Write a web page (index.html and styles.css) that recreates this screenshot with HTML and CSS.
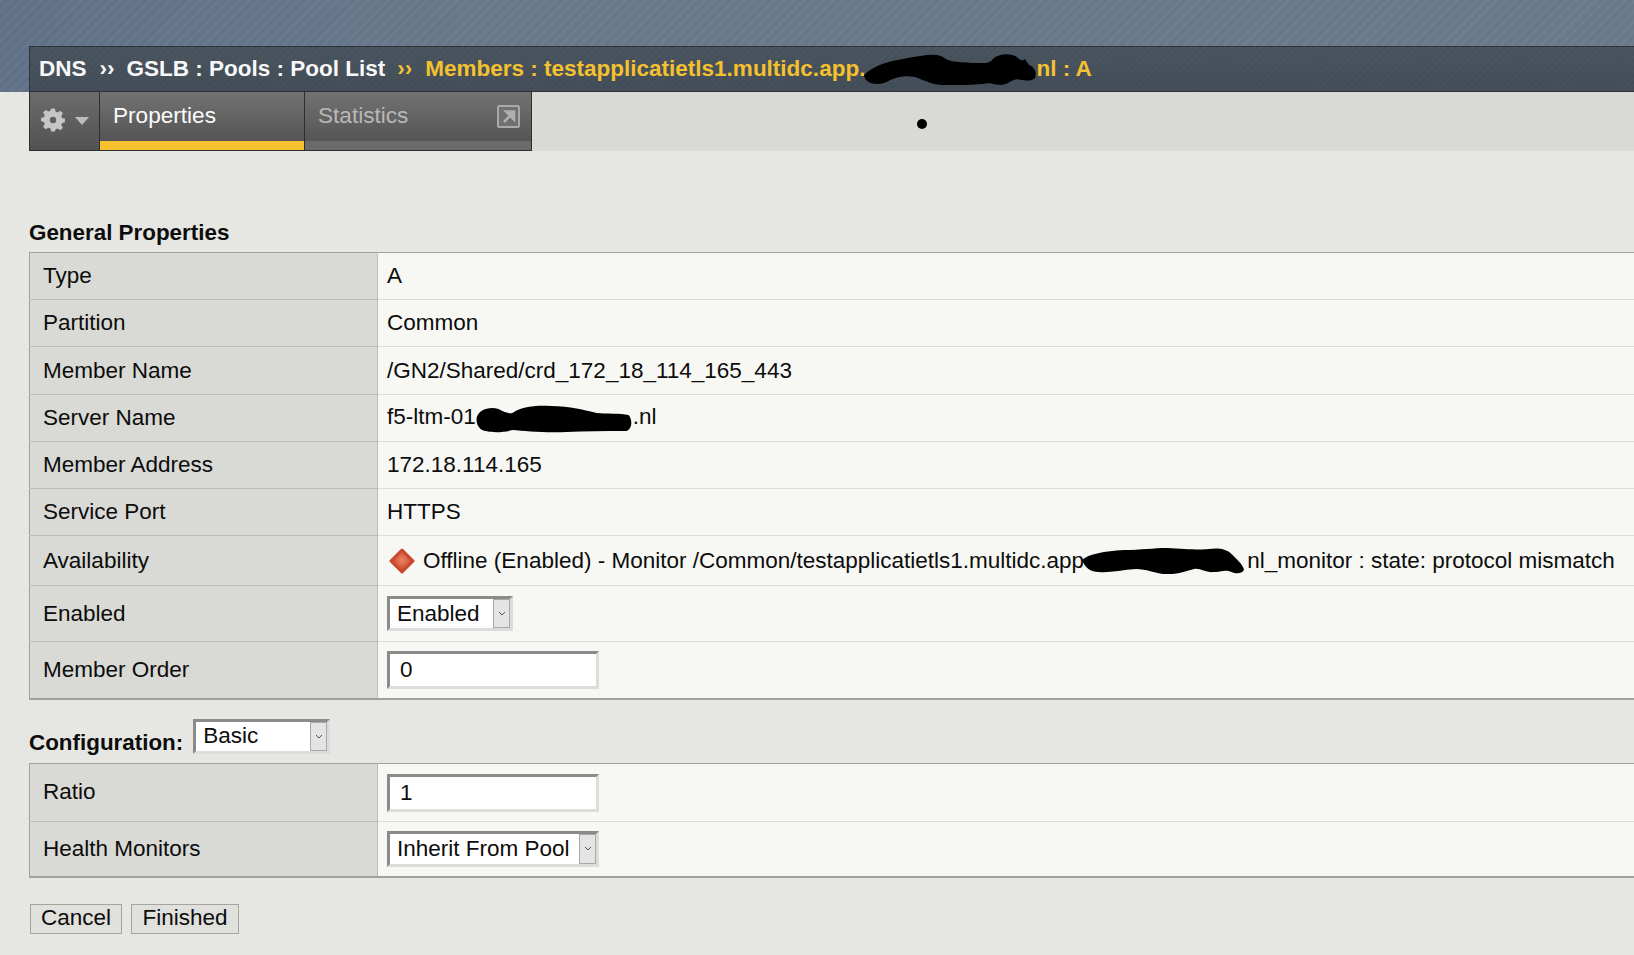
FILE: index.html
```html
<!DOCTYPE html>
<html lang="en">
<head>
<meta charset="utf-8">
<title>Pool Member Properties</title>
<link rel="stylesheet" href="styles.css">
</head>
<body>
<header class="band">
  <div class="crumbs">
    <span class="crumb">DNS</span>
    <span class="sep">››</span>
    <span class="crumb">GSLB : Pools : Pool List</span>
    <span class="sep gold">››</span>
    <span class="current">Members : testapplicatietls1.multidc.app.<svg class="blob blob-head" viewBox="0 0 173 32" aria-hidden="true"><path d="M1 22C8 15 20 9 40 6C62 2 72 0 80 4C84 8 92 9 110 10C122 10 126 11 130 6C136 0 150 0 155 5C158 8 160 8 162 6L166 12C172 14 174 20 172 25C168 29 162 27 158 27C150 24 148 31 138 32C130 32 128 29 120 31C104 32 92 33 84 32C70 33 58 26 52 24C40 22 30 25 24 29C14 33 2 31 1 22Z"/></svg>nl : A</span>
  </div>
</header>
<nav class="tabs">
  <div class="tab-set">
    <div class="tab-menu">
      <svg class="gear" viewBox="0 0 24 24" aria-hidden="true"><path fill-rule="evenodd" d="M10 0h4l.8 3.4 2.200.9 3-1.800 2.800 2.800-1.800 3 .9 2.200 3.100.5v4l-3.100.7-.9 2.200 1.800 3-2.800 2.800-3-1.800-2.200.9L14 25h-4l-.8-3.200-2.200-.9-3 1.800-2.800-2.800 1.800-3-.9-2.200L-1 14v-4l3.100-.5.9-2.200-1.800-3L4 1.500l3 1.800 2.200-.9zM12 9a3.500 3.500 0 1 0 0 7 3.500 3.500 0 0 0 0-7z"/></svg>
      <span class="caret"></span>
    </div>
    <div class="tab active"><span class="tab-label">Properties</span></div>
    <div class="tab inactive">
      <span class="tab-label">Statistics</span>
      <svg class="ext" viewBox="0 0 23 23" aria-hidden="true"><rect x="1" y="1" width="21" height="21" rx="1.500"/><path d="M7 17L15.500 8.500M9 6.500h8v8z"/></svg>
    </div>
  </div>
  <span class="dot"></span>
</nav>
<main class="content">
  <h2 class="section-title">General Properties</h2>
  <table class="props">
    <tr class="r47"><th>Type</th><td>A</td></tr>
    <tr class="r47"><th>Partition</th><td>Common</td></tr>
    <tr class="r48"><th>Member Name</th><td>/GN2/Shared/crd_172_18_114_165_443</td></tr>
    <tr class="r47"><th>Server Name</th><td>f5-ltm-01<svg class="blob blob-server" viewBox="0 0 158 28" aria-hidden="true"><path d="M2 14C3 4 16 1 24 4C30 7 34 9 38 8C46 2 60 0 76 1C96 1 110 5 122 8C132 9 146 8 154 10C158 14 158 24 152 26C130 26 110 26 92 27C70 28 50 26 38 25C28 28 12 28 6 24C3 21 2 18 2 14Z"/></svg>.nl</td></tr>
    <tr class="r47"><th>Member Address</th><td>172.18.114.165</td></tr>
    <tr class="r47"><th>Service Port</th><td>HTTPS</td></tr>
    <tr class="r50"><th>Availability</th><td><div class="status"><svg class="diamond" viewBox="0 0 26 26" aria-hidden="true"><defs><radialGradient id="dg" cx=".5" cy=".45" r=".55"><stop offset="0" stop-color="#ec8467"/><stop offset="1" stop-color="#c5401f"/></radialGradient></defs><path d="M13 2L24 13 13 24 2 13z" fill="url(#dg)" stroke="#c9492a" stroke-width="3" stroke-linejoin="round"/></svg><span>Offline (Enabled) - Monitor /Common/testapplicatietls1.multidc.app<svg class="blob blob-status" viewBox="0 0 159 26" preserveAspectRatio="none" aria-hidden="true"><path d="M2 12C8 6 24 3 42 2C60 2 70 0 84 0C100 1 116 2 124 1C132 0 140 0 146 6C152 12 158 18 158 22C156 26 150 26 146 24C140 21 136 24 128 24C122 25 116 20 110 21C100 24 92 27 80 26C72 25 64 21 54 21C40 22 28 25 18 24C10 24 5 20 2 12Z"/></svg>nl_monitor : state: protocol mismatch</span></div></td></tr>
    <tr class="r56"><th>Enabled</th><td><div class="select select-enabled"><span class="select-val">Enabled</span><span class="select-btn"><svg viewBox="0 0 8 5" aria-hidden="true"><path d="M1 1l3 3 3-3"/></svg></span></div></td></tr>
    <tr class="r57"><th>Member Order</th><td><input class="field" type="text" value="0" aria-label="Member Order"></td></tr>
  </table>
  <div class="config-head">
    <h2 class="section-title-inline">Configuration:</h2>
    <div class="select select-config"><span class="select-val">Basic</span><span class="select-btn"><svg viewBox="0 0 8 5" aria-hidden="true"><path d="M1 1l3 3 3-3"/></svg></span></div>
  </div>
  <table class="props">
    <tr class="r58"><th>Ratio</th><td><input class="field field-ratio" type="text" value="1" aria-label="Ratio"></td></tr>
    <tr class="r56"><th>Health Monitors</th><td><div class="select select-health"><span class="select-val">Inherit From Pool</span><span class="select-btn"><svg viewBox="0 0 8 5" aria-hidden="true"><path d="M1 1l3 3 3-3"/></svg></span></div></td></tr>
  </table>
  <div class="actions">
    <button class="btn btn-cancel" type="button">Cancel</button>
    <button class="btn btn-finished" type="button">Finished</button>
  </div>
</main>
</body>
</html>
```
FILE: styles.css
```css
* { box-sizing: border-box; }
html, body { margin: 0; height: 100%; overflow: hidden; }
body {
  background: #e6e7e2;
  color: #0c0c0c;
  font-family: "Liberation Sans", Arial, sans-serif;
  font-size: 22.500px;
}
.band {
  height: 92px;
  padding: 46px 0 0 29px;
  background:
    repeating-linear-gradient(135deg, rgba(255,255,255,.018) 0 3px, rgba(0,0,0,.018) 3px 7px),
    linear-gradient(90deg, #62738a, #6a7a8c 30%, #6b7b8d);
}
.crumbs {
  height: 46px;
  display: flex;
  align-items: center;
  padding-left: 9px;
  background:
    repeating-linear-gradient(135deg, rgba(255,255,255,.012) 0 2px, rgba(0,0,0,.012) 2px 5px),
    linear-gradient(#49545f, #424d58);
  border-top: 1px solid #2d3339;
  border-bottom: 1px solid #2d3339;
  border-left: 1px solid #2d3339;
  font-size: 22.500px;
  font-weight: 700;
  color: #f8f8f8;
  white-space: nowrap;
}
.sep { margin: 0 12px 0 13px; font-weight: 700; }
.gold { color: #f5c12e; margin: 0 13px 0 12px; }
.current { color: #f5c12e; display: flex; align-items: center; }
.blob { fill: #000; flex: none; vertical-align: middle; }
.blob-head { width: 173px; height: 32px; margin: 0 0 0 -2px; }
.blob-server { width: 159px; height: 28px; margin: 0 0 0 -2px; vertical-align: -9px; }
.blob-status { width: 165px; height: 26px; margin: 0 2px 0 -4px; }
.tabs {
  height: 59px;
  margin: 0;
  display: flex;
  align-items: center;
  background: linear-gradient(90deg, #e6e7e2 29px, #d9dad5 29px);
}
.tab-set {
  margin-left: 29px;
  height: 59px;
  width: 503px;
  display: flex;
  border: 1px solid #2e2e2e;
  border-top: 0;
  background: #2e2e2e;
  gap: 1px;
}
.tab-menu {
  width: 69px;
  display: flex;
  align-items: center;
  padding: 0 0 3px 12px;
  background: linear-gradient(#6c6c6c, #525252);
}
.gear { width: 22px; height: 23px; fill: #c6c6c6; overflow: visible; }
.caret {
  margin-left: 11px;
  margin-top: 3px;
  border-left: 7px solid transparent;
  border-right: 7px solid transparent;
  border-top: 8px solid #bdbdbd;
}
.tab {
  display: flex;
  align-items: flex-start;
  justify-content: space-between;
  padding: 11px 11px 0 13px;
  background: linear-gradient(#727272, #555555);
  font-size: 22.600px;
}
.active {
  width: 204px;
  color: #fbfbfb;
  border-bottom: 9px solid #f5c12e;
}
.inactive {
  flex: 1;
  color: #b8b8b8;
  border-bottom: 9px solid #6b6b6b;
}
.ext { width: 23px; height: 23px; margin-top: 2px; fill: #707070; stroke: #a9a9a9; stroke-width: 2; }
.ext path { fill: #b0b0b0; stroke: #b0b0b0; stroke-width: 2.500; }
.dot {
  margin-left: 385px;
  margin-top: 5px;
  width: 10px;
  height: 10px;
  border-radius: 50%;
  background: #000;
}
.content { padding: 68px 0 0 29px; }
.section-title {
  margin: 0;
  height: 33px;
  font-size: 22.400px;
  font-weight: 700;
  line-height: 28px;
}
.props {
  width: 100%;
  border-collapse: collapse;
  border-top: 1px solid #a0a19d;
  border-bottom: 2px solid #a0a19d;
}
.props th {
  width: 348px;
  padding: 0 0 0 13px;
  font-weight: 400;
  text-align: left;
  background: #d9dad5;
  border-left: 1px solid #a0a19d;
  border-right: 1px solid #bcbdb8;
  border-bottom: 1px solid #bcbdb8;
}
.props td {
  padding: 0 0 0 9px;
  background: #f7f8f3;
  border-bottom: 1px solid #dcddd8;
  white-space: nowrap;
}
.props tr:last-child th, .props tr:last-child td { border-bottom: 0; }
.r47 { height: 47px; }
.r48 { height: 48px; }
.r50 { height: 50px; }
.r56 { height: 56px; }
.r57 { height: 57px; }
.r58 { height: 58px; }
.status { display: flex; align-items: center; gap: 8px; margin-left: 2px; }
.status span { display: flex; align-items: center; }
.diamond { width: 26px; height: 26px; flex: none; }
.field {
  display: block;
  width: 212px;
  height: 38px;
  padding: 0 0 0 10px;
  font: inherit;
  color: #0c0c0c;
  background: #fff;
  border-style: solid;
  border-width: 3px;
  border-color: #8b8b8b #dcdcdc #dcdcdc #8b8b8b;
  outline: 0;
}
.field-ratio { margin-top: 2px; }
.select {
  display: flex;
  align-items: stretch;
  background: #fff;
  border-style: solid;
  border-width: 3px;
  border-color: #8b8b8b #dcdcdc #dcdcdc #8b8b8b;
}
.select-val { flex: 1; padding-left: 7px; display: flex; align-items: center; }
.select-btn {
  width: 17px;
  display: flex;
  align-items: center;
  justify-content: center;
  background: #e4e4e4;
  border: 1px solid #a8a8a8;
}
.select-btn svg { width: 8px; height: 5px; fill: none; stroke: #555; stroke-width: 1; }
.select-enabled { width: 126px; height: 35px; }
.select-health { width: 212px; height: 36px; }
.select-config { width: 137px; height: 35px; }
.select-config .select-val { align-items: flex-start; padding-left: 7px; line-height: 28px; }
.config-head {
  height: 63px;
  display: flex;
  align-items: flex-start;
  padding-top: 19px;
  gap: 10px;
}
.section-title-inline {
  margin: 10px 0 0;
  font-size: 22.400px;
  font-weight: 700;
  line-height: 28px;
}
.actions { display: flex; gap: 9px; padding: 26px 0 0 1px; }
.btn {
  height: 30px;
  padding: 0 0 2px;
  font: inherit;
  color: #0c0c0c;
  background: #e0e0dc;
  border: 1px solid #a4a5a1;
  border-radius: 0;
}
.btn-cancel { width: 92px; }
.btn-finished { width: 108px; }
```
